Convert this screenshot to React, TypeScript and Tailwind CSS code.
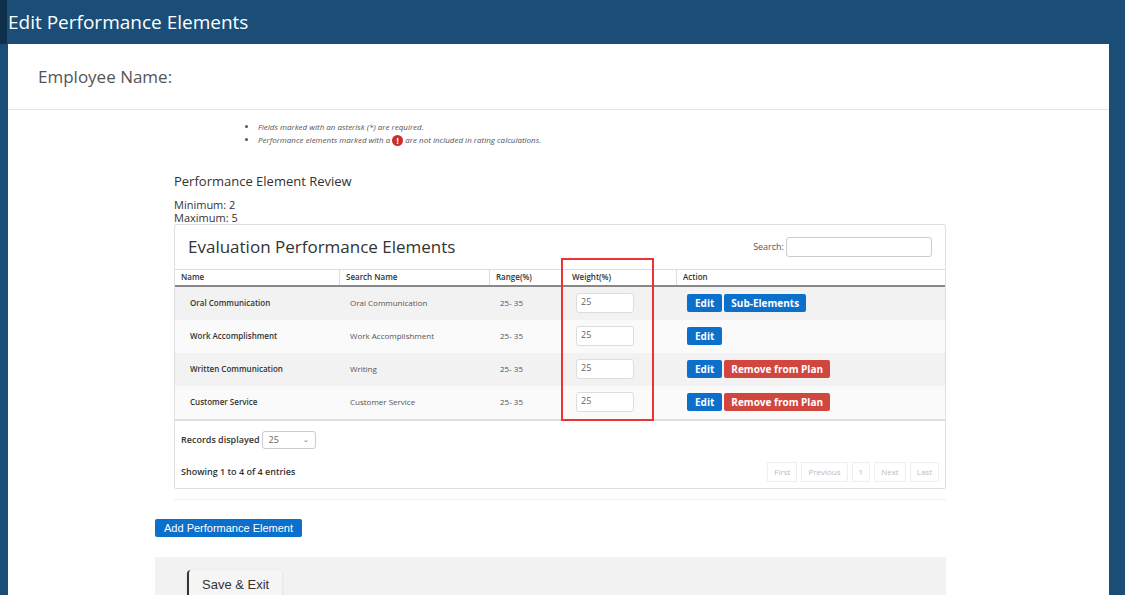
import React from 'react';

const rows = [
  { name: 'Oral Communication', search: 'Oral Communication', extra: 'sub' },
  { name: 'Work Accomplishment', search: 'Work Accomplishment', extra: '' },
  { name: 'Written Communication', search: 'Writing', extra: 'remove' },
  { name: 'Customer Service', search: 'Customer Service', extra: 'remove' },
];

const font = { fontFamily: '"Open Sans", sans-serif' };

export default function App() {
  return (
    <div className="w-[1125px] h-[595px] overflow-hidden bg-[#1a4e78] flex flex-col text-[#333]" style={font}>
      <div className="h-[44px] shrink-0 pl-[8px] flex items-center text-white text-[19px] border-l-[7px] border-[#0f2f4a]">
        <span className="-ml-[8px] pl-[1px]">Edit Performance Elements</span>
      </div>
      <div className="flex-1 flex border-l-[8px] border-[#1a4e78] pr-[16px]">
        <div className="flex-1 bg-white flex flex-col">
          <div className="h-[66px] shrink-0 border-b border-[#e3e3e3] flex items-center pl-[30px] text-[17px] text-[#555]">
            Employee Name:
          </div>
          <div className="flex flex-col pl-[147px] pt-[10px]">
            <ul className="list-disc pl-[103px] text-[8px] italic text-[#555] leading-[13px]">
              <li>Fields marked with an asterisk (*) are required.</li>
              <li>
                Performance elements marked with a{' '}
                <span className="inline-flex w-[11px] h-[11px] rounded-full bg-[#c9302c] text-white text-[8px] font-bold not-italic items-center justify-center align-middle">!</span>{' '}
                are not included in rating calculations.
              </li>
            </ul>
            <div className="ml-[19px] w-[772px] mt-[26px]">
              <div className="text-[13px] text-[#333]">Performance Element Review</div>
              <div className="text-[11px] leading-[13px] mt-[6px]">Minimum: 2</div>
              <div className="text-[11px] leading-[13px]">Maximum: 5</div>
              <div className="relative border border-[#e0e0e0] rounded-[2px]">
                <div className="h-[44px] flex items-center justify-between pl-[13px] pr-[13px]">
                  <span className="text-[17px] text-[#333]">Evaluation Performance Elements</span>
                  <span className="flex items-center gap-[2px] text-[9px] text-[#555]">
                    Search:
                    <span className="w-[146px] h-[20px] border border-[#ccc] rounded-[3px] inline-block" />
                  </span>
                </div>
                <div className="grid grid-cols-[165px_150px_72px_115px_1fr] text-[8px] font-semibold text-[#333] h-[18px] border-t border-[#ddd] border-b-2 border-b-[#888]">
                  {['Name', 'Search Name', 'Range(%)', 'Weight(%)', 'Action'].map((h, i) => (
                    <div key={h} className={`flex items-center pl-[6px] ${i < 4 ? 'border-r border-[#ddd]' : ''} ${i === 3 ? 'pl-[10px]' : ''}`}>{h}</div>
                  ))}
                </div>
                {rows.map((r, i) => (
                  <div key={r.name} className={`grid grid-cols-[165px_150px_72px_115px_1fr] h-[33px] items-center text-[8px] ${i % 2 === 0 ? 'bg-[#f2f2f2]' : 'bg-[#fafafa]'}`}>
                    <div className="pl-[15px] font-semibold">{r.name}</div>
                    <div className="pl-[10px] text-[#555]">{r.search}</div>
                    <div className="pl-[10px] text-[#555]">25- 35</div>
                    <div className="pl-[14px]">
                      <div className="w-[58px] h-[20px] bg-white border border-[#ddd] rounded-[3px] text-[9px] text-[#666] pl-[4px] leading-[16px]">25</div>
                    </div>
                    <div className="pl-[10px] flex gap-[2px]">
                      <span className="bg-[#0b6fcc] text-white font-bold text-[10px] rounded-[2px] px-[8px] h-[18px] flex items-center">Edit</span>
                      {r.extra === 'sub' && <span className="bg-[#0b6fcc] text-white font-bold text-[10px] rounded-[2px] px-[7px] h-[18px] flex items-center">Sub-Elements</span>}
                      {r.extra === 'remove' && <span className="bg-[#d24640] text-white font-bold text-[10px] rounded-[2px] px-[7px] h-[18px] flex items-center">Remove from Plan</span>}
                    </div>
                  </div>
                ))}
                <div className="border-t-2 border-[#ddd] pt-[10px] pb-[6px] px-[6px]">
                  <div className="flex items-center gap-[2px] text-[9px] font-semibold">
                    Records displayed
                    <span className="w-[54px] h-[18px] border border-[#ccc] rounded-[3px] flex items-center justify-between px-[6px] text-[9px] font-normal text-[#666]">25<span className="text-[7px]">⌄</span></span>
                  </div>
                  <div className="flex items-center justify-between mt-[13px]">
                    <span className="text-[9px] font-semibold">Showing 1 to 4 of 4 entries</span>
                    <div className="flex gap-[4px] text-[8px] text-[#bbb]">
                      {['First', 'Previous', '1', 'Next', 'Last'].map(p => (
                        <span key={p} className="h-[20px] px-[6px] border border-[#eee] flex items-center">{p}</span>
                      ))}
                    </div>
                  </div>
                </div>
                <div className="absolute left-[386px] top-[33px] w-[93px] h-[163px] border-2 border-[#e33]" />
              </div>
              <div className="border-b border-[#eee] mt-[10px]" />
            </div>
            <div className="mt-[14px]">
              <span className="inline-flex bg-[#0b6fcc] text-white text-[11px] px-[9px] h-[18px] items-center rounded-[2px]" style={{ fontFamily: '"Liberation Sans", sans-serif' }}>Add Performance Element</span>
            </div>
            <div className="mt-[19px] w-[791px] h-[60px] bg-[#f2f2f2] pl-[32px] pt-[13px]">
              <span className="inline-flex h-[29px] px-[13px] items-center bg-[#f5f5f5] border-l-2 border-[#333] rounded-[4px] shadow text-[13px] text-[#333]" style={{ fontFamily: '"Liberation Sans", sans-serif' }}>Save &amp; Exit</span>
            </div>
          </div>
        </div>
      </div>
    </div>
  );
}
